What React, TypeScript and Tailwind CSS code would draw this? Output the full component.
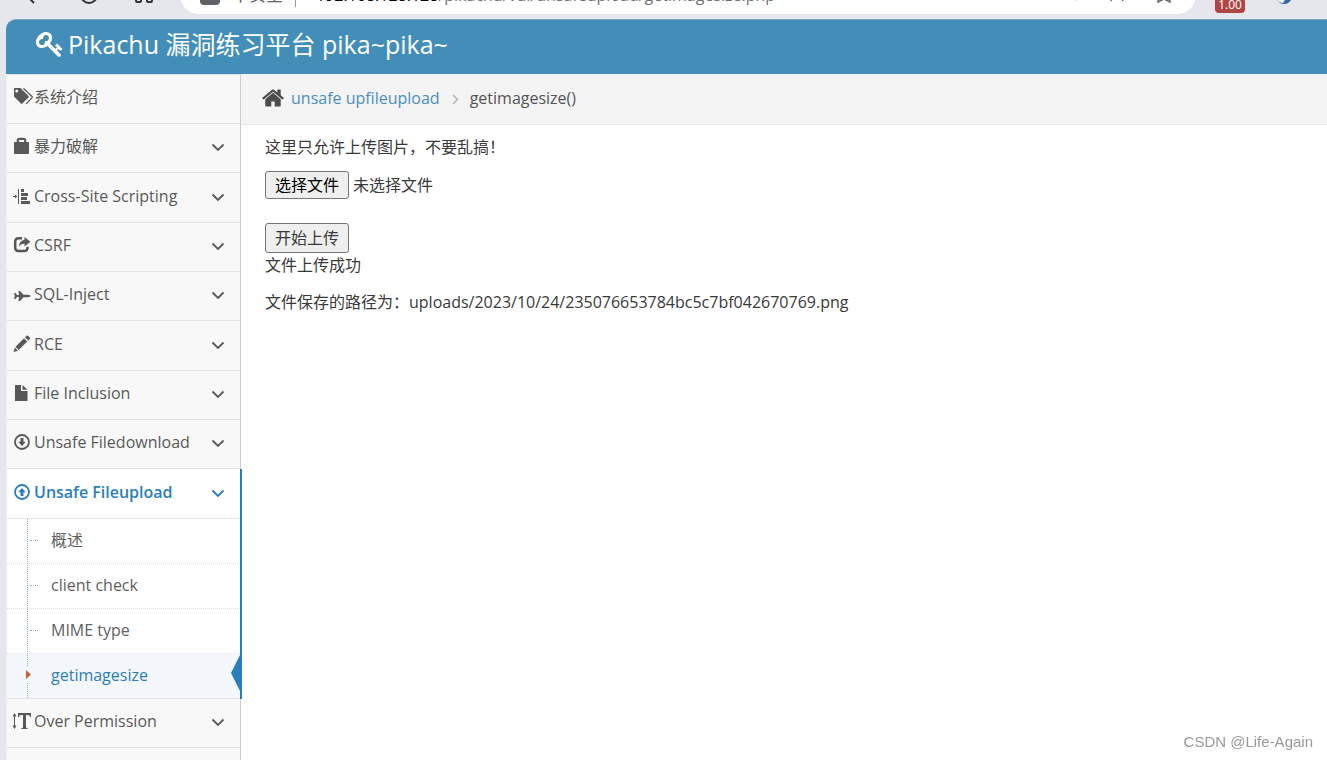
import type { ReactNode } from "react";

type SubItem = {
    label: string;
    active?: boolean;
};

type MenuItem = {
    label: string;
    icon: ReactNode;
    children?: SubItem[];
    leaf?: boolean;
};

const menu: MenuItem[] = [
    {
        label: "系统介绍",
        leaf: true,
        icon: (
            <>
                <path fillRule="evenodd" d="M2 1q0-1 1-1h5.500l8 8q.6.7 0 1.400l-6.200 6.200q-.7.6-1.400 0L2 8.500zM4.700 1.500a1.500 1.500 0 1 0 0 3 1.500 1.500 0 0 0 0-3z" />
                <path d="M11.500.5l8.500 8q.6.7 0 1.400l-6 6" fill="none" stroke="currentColor" strokeWidth="1.300" />
            </>
        ),
    },
    {
        label: "暴力破解",
        icon: (
            <>
                <rect x="2" y="5" width="15" height="12" rx="1" />
                <path d="M5.800 6V3.500q0-1.700 1.700-1.700h4q1.700 0 1.700 1.700V6" fill="none" stroke="currentColor" strokeWidth="2.200" />
            </>
        ),
    },
    {
        label: "Cross-Site Scripting",
        icon: (
            <>
                <path d="M6 2h1v15H6zM9 2h3v3H9zM9 6h7v3H9zM9 10h6v3H9zM9 14h9v3H9z" />
                <path d="M1 9h2V7.500L5.500 9.500 3 11.500V10H1z" />
            </>
        ),
    },
    {
        label: "CSRF",
        icon: (
            <>
                <path d="M10 2.300H6.500Q3.200 2.300 3.200 5.500v6.300q0 3.200 3.300 3.200h5.800q3.200 0 3.200-3.200v-1" fill="none" stroke="currentColor" strokeWidth="2.500" />
                <path d="M12.500 1l6 4.700-6 4.800V7.700Q9 7.300 7 10.500 7.500 4.500 12.500 3.800z" />
            </>
        ),
    },
    {
        label: "SQL-Inject",
        icon: (
            <path d="M2 8h1.500L5 10h2L6.500 6H8l3.500 3.800H16q2.200.4 3 1.200-.8.800-3 1.200h-4.500L8 16H6.500L7 12H5l-1.500 2H2l.8-3z" />
        ),
    },
    {
        label: "RCE",
        icon: (
            <path d="M14.500.8q.7-.6 1.400 0l1.800 1.800q.6.7 0 1.400l-1.500 1.500L13 2.300zM12 3.300l3.200 3.200-8.500 8.500-3.200-3.200zM2.800 12.600l3.100 3.100-4.400 1.300z" />
        ),
    },
    {
        label: "File Inclusion",
        icon: <path d="M3.500 1H9v6h6.500v10h-12q-.5 0-.5-.5v-15q0-.5.5-.5zM10.500 1l5 4.700h-5z" />,
    },
    {
        label: "Unsafe Filedownload",
        icon: (
            <>
                <circle cx="10" cy="9" r="7" fill="none" stroke="currentColor" strokeWidth="1.800" />
                <path d="M8.500 5h3v3.700h2.300L10 13 6.200 8.700h2.300z" />
            </>
        ),
    },
    {
        label: "Unsafe Fileupload",
        icon: (
            <>
                <circle cx="10" cy="9" r="7" fill="none" stroke="currentColor" strokeWidth="1.800" />
                <path d="M8.500 13h3V9.300h2.300L10 5 6.200 9.300h2.300z" />
            </>
        ),
        children: [
            { label: "概述" },
            { label: "client check" },
            { label: "MIME type" },
            { label: "getimagesize", active: true },
        ],
    },
    {
        label: "Over Permission",
        icon: (
            <>
                <path d="M2 4h1v10H2zM2.500 1l2 3.500h-4zM2.500 17l-2-3.500h4z" />
                <path d="M6 1h13v4h-.8q-.4-2-2.200-2h-2v12q0 1.200 1.700 1.300v.7H9.300v-.7q1.700-.1 1.700-1.300V3H9Q7.200 3 6.800 5H6z" />
            </>
        ),
    },
];

const AngleDown = () => (
    <svg className="h-4 w-4 shrink-0" viewBox="0 0 16 16" fill="none" stroke="currentColor" strokeWidth="1.800">
        <path d="M2.500 4.500L8 10l5.500-5.500" />
    </svg>
);

const BrowserBar = () => {
    return (
        <div className="flex h-[19px] items-end overflow-hidden bg-[#e6e7ec] text-[#333]">
            <svg className="h-5 w-[180px] shrink-0" viewBox="0 0 180 20" fill="none" stroke="currentColor" strokeWidth="2">
                <path d="M34 4l-5-5" />
                <circle cx="89" cy="-4" r="8" />
                <rect x="136" y="-2" width="5" height="5" rx="1" />
                <rect x="147" y="-2" width="5" height="5" rx="1" />
            </svg>
            <div className="mb-[5px] flex h-[38px] min-w-0 flex-1 items-center rounded-full bg-white pl-5 pr-6">
                <span className="mt-1 h-4 w-5 shrink-0 rounded-sm bg-[#5f6368]" />
                <span className="ml-3 shrink-0 text-[17px] text-[#5f6368]">不安全</span>
                <span className="ml-3 mt-1 h-5 w-px shrink-0 bg-[#999]" />
                <span className="ml-5 flex-1 truncate text-base text-[#707070]">
                    <span className="text-black">192.168.128.128</span>/pikachu/vul/unsafeupload/getimagesize.php
                </span>
                <svg className="h-5 w-[120px] shrink-0" viewBox="0 0 120 20" fill="none" stroke="#5f6368" strokeWidth="1.500">
                    <path d="M21 13l3 2M59 16l4-9M71 16l-4-9" />
                    <path d="M112 1l2.500 5.500 6 .5-3.500 4 1 6-6-3-6 3 1-6-3.500-4 6-.5z" />
                </svg>
            </div>
            <div className="flex w-[131px] shrink-0 items-end gap-[31px] pl-[19px]">
                <span className="mb-[6px] w-[30px] rounded-sm bg-[#b04545] text-center text-xs text-white">1.00</span>
                <svg className="mb-[15px] h-4 w-4" viewBox="0 0 16 16">
                    <circle cx="8" cy="8" r="8" fill="#3a63ad" />
                    <path d="M1 12h8l-2 3q-4 0-6-3z" fill="#e8eefa" />
                </svg>
            </div>
        </div>
    );
};

const Navbar = () => (
    <header className="flex h-[55px] items-center gap-1 rounded-tl-[10px] border-t border-[#7ba6c4] bg-[#438eb9] pb-1.5 pl-[30px] text-white">
        <svg className="h-7 w-7 shrink-0" viewBox="0 0 1792 1792" fill="currentColor">
            <path d="M832 512q0-80-56-136t-136-56-136 56-56 136q0 42 19 83-41-19-83-19-80 0-136 56t-56 136 56 136 136 56 136-56 56-136q0-42-19-83 41 19 83 19 80 0 136-56t56-136zm851 704q0 17-49 66t-66 49q-9 0-28.500-16t-36.500-33-38.500-40-24.500-26l-96 96 220 220q28 28 28 68 0 42-39 81t-81 39q-40 0-68-28l-671-671q-176 131-365 131-163 0-265.500-102.500t-102.500-265.500q0-160 95-313t248-248 313-95q163 0 265.500 102.500t102.500 265.500q0 189-131 365l355 355 96-96q-3-3-26-24.500t-40-38.500-33-36.500-16-28.500q0-17 49-66t66-49q13 0 23 10 6 6 46 44.500t82 79.500 86.500 86 73 78 28.500 41z" />
        </svg>
        <a href="#" className="text-[25px] leading-8">Pikachu 漏洞练习平台 pika~pika~</a>
    </header>
);

const SubMenu = ({ items }: { items: SubItem[] }) => {
    return (
        <ul className="relative border-b border-[#e4e4e4]">
            {/* tree line */}
            <li aria-hidden="true" className="absolute inset-y-0 left-5 z-10 border-l border-dotted border-[#8fb0c8]" />
            {items.map((sub, i) => (
                <li key={sub.label} className={i > 0 ? "border-t border-dotted border-[#ddd]" : ""}>
                    <a
                        href="#"
                        className={
                            sub.active
                                ? "relative flex h-11 items-center bg-[#f4f7fb] pb-0.5 pl-11 text-[#2b7dbc]"
                                : "relative flex h-11 items-center pb-0.5 pl-11 text-[#616161]"
                        }
                    >
                        {sub.active ? (
                            <>
                                <svg className="absolute left-4 top-3 z-20 h-4 w-3" viewBox="0 0 12 16">
                                    <path d="M0 0h6v16H0z" fill="#f4f7fb" />
                                    <path d="M3 4l5 4.500L3 13z" fill="#c86139" />
                                </svg>
                                <svg className="absolute right-0 top-px h-9 w-[9px]" viewBox="0 0 9 36">
                                    <path d="M9 0v36L0 18z" fill="#2b7dbc" />
                                </svg>
                            </>
                        ) : (
                            <span className="absolute left-[23px] top-[21px] w-2 border-t border-dotted border-[#8fb0c8]" />
                        )}
                        {sub.label}
                    </a>
                </li>
            ))}
        </ul>
    );
};

const Sidebar = () => (
    <nav className="w-[234px] shrink-0 border-l border-[#f0f0f3] bg-[#f8f8f8]">
        <ul className="border-t border-[#e4e4e4] [&>li:nth-child(3n)>a]:h-[50px]">
            {menu.map((item) => (
                <li
                    key={item.label}
                    className={item.children ? "relative bg-white" : "relative"}
                >
                    <a
                        href="#"
                        className={
                            item.children
                                ? "flex h-[49px] items-center justify-between border-b border-[#e4e4e4] pl-[5px] pr-[14px] font-semibold text-[#2b7dbc]"
                                : "flex h-[49px] items-center justify-between border-b border-[#e4e4e4] pl-[5px] pr-[14px] text-[#585858]"
                        }
                    >
                        <span className="flex items-center pb-1">
                            <svg className="h-[18px] w-[22px] shrink-0" viewBox="0 0 22 18" fill="currentColor">
                                {item.icon}
                            </svg>
                            {item.label}
                        </span>
                        {!item.leaf && <AngleDown />}
                    </a>
                    {item.children && <SubMenu items={item.children} />}
                    {/* marker of the open section */}
                    {item.children && <span className="absolute inset-y-0 -right-0.5 w-0.5 bg-[#2b7dbc]" />}
                </li>
            ))}
        </ul>
    </nav>
);

const Breadcrumbs = () => (
    <div className="flex h-[51px] items-center border-b border-[#e5e5e5] bg-[#f4f4f4] pb-0.5 pl-5">
        <svg className="h-6 w-6 shrink-0 text-[#4c4c4c]" viewBox="0 0 1792 1792" fill="currentColor">
            <path d="M1472 992v480q0 26-19 45t-45 19h-384v-384h-256v384h-384q-26 0-45-19t-19-45v-480q0-1 .5-3t.5-3l575-474 575 474q1 2 1 6zm223-69l-62 74q-8 9-21 11h-3q-13 0-21-7l-692-577-692 577q-12 8-24 7-13-2-21-11l-62-74q-8-10-7-23.500t11-21.500l719-599q32-26 76-26t76 26l244 204v-195q0-14 9-23t23-9h192q14 0 23 9t9 23v408l219 182q10 8 11 21.500t-7 23.500z" />
        </svg>
        <a href="#" className="ml-1.5 text-[#4c8fbd]">unsafe upfileupload</a>
        <svg className="mx-2 mt-0.5 h-3 w-[14px]" viewBox="0 0 14 12" fill="none" stroke="#b2b6bf" strokeWidth="1.600">
            <path d="M5 2l4.500 4.500L5 11" />
        </svg>
        <span className="text-[#555]">getimagesize()</span>
    </div>
);

const UploadForm = () => (
    <form className="flex flex-col items-start px-6 pt-[10px] text-[#393939]" onSubmit={(e) => e.preventDefault()}>
        <p>这里只允许上传图片，不要乱搞！</p>
        <div className="mt-3 flex items-center gap-1">
            <input id="uploadfile" type="file" className="sr-only" />
            <label
                htmlFor="uploadfile"
                className="flex h-7 items-center rounded-[3px] border border-[#767676] bg-[#efefef] px-[9px] text-black"
            >
                选择文件
            </label>
            <span>未选择文件</span>
        </div>
        <button type="submit" className="mt-6 h-[30px] rounded-[3px] border border-[#767676] bg-[#efefef] px-[9px]">
            开始上传
        </button>
        <p>文件上传成功</p>
        <p className="mt-[13px]">文件保存的路径为：uploads/2023/10/24/235076653784bc5c7bf042670769.png</p>
    </form>
);

export default function App() {
    return (
        <div className="flex h-screen flex-col overflow-hidden bg-[#e6e7ec] font-['Open_Sans','Noto_Sans_CJK_SC',sans-serif] text-base">
            <BrowserBar />
            <div className="flex min-h-0 flex-1 flex-col pl-1.5">
                <Navbar />
                <div className="flex min-h-0 flex-1">
                    <Sidebar />
                    <main className="min-w-0 flex-1 border-l border-[#ccc] bg-white">
                        <Breadcrumbs />
                        <UploadForm />
                    </main>
                </div>
            </div>
            <span className="fixed bottom-2 right-[14px] font-['Liberation_Sans',sans-serif] text-[15px] leading-5 text-[#999]">
                CSDN @Life-Again
            </span>
        </div>
    );
}
